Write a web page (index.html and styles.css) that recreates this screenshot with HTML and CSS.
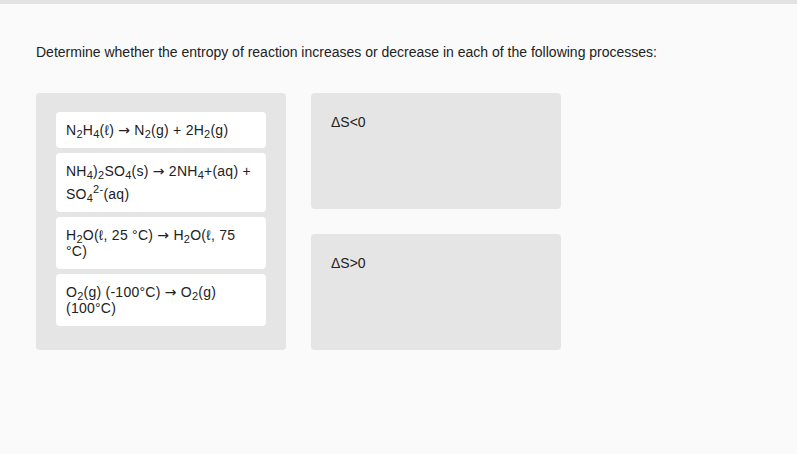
FILE: index.html
```html
<!DOCTYPE html>
<html>
<head>
<meta charset="utf-8">
<link rel="stylesheet" href="styles.css">
</head>
<body>
<div class="topbar"></div>
<main class="content">
  <p class="prompt">Determine whether the entropy of reaction increases or decrease in each of the following processes:</p>
  <div class="board">
    <div class="source">
      <div class="card">N<sub>2</sub>H<sub>4</sub>(ℓ) <span class="arrow">→</span> N<sub>2</sub>(g) + 2H<sub>2</sub>(g)</div>
      <div class="card">NH<sub>4</sub>)<sub>2</sub>SO<sub>4</sub>(s) <span class="arrow">→</span> 2NH<sub>4</sub>+(aq) + SO<sub>4</sub><sup>2-</sup>(aq)</div>
      <div class="card">H<sub>2</sub>O(ℓ, 25 °C) <span class="arrow">→</span> H<sub>2</sub>O(ℓ, 75 °C)</div>
      <div class="card">O<sub>2</sub>(g) (-100°C) <span class="arrow">→</span> O<sub>2</sub>(g) (100°C)</div>
    </div>
    <div class="targets">
      <div class="target">ΔS&lt;0</div>
      <div class="target">ΔS&gt;0</div>
    </div>
  </div>
</main>
</body>
</html>
```
FILE: styles.css
```css
html, body {
  margin: 0;
  padding: 0;
  background: #fafafa;
  font-family: "Liberation Sans", Arial, sans-serif;
  font-size: 14px;
  color: #222;
}
.topbar {
  height: 4px;
  background: #e2e2e2;
}
.content {
  padding: 40px 36px 0 36px;
}
.prompt {
  margin: 0;
  line-height: 16px;
}
.board {
  display: flex;
  gap: 25px;
  margin-top: 33px;
}
.source {
  width: 250px;
  box-sizing: border-box;
  background: #e5e5e5;
  border-radius: 4px;
  padding: 19px 20px 24px 20px;
  display: flex;
  flex-direction: column;
  gap: 5px;
}
.card {
  background: #fff;
  border-radius: 4px;
  padding: 10px;
  line-height: 16px;
  letter-spacing: 0.25px;
}
.arrow {
  font-family: "DejaVu Sans", sans-serif;
  font-size: 14px;
}
sub {
  font-size: 11px;
  line-height: 0;
  vertical-align: -3px;
}
sup {
  font-size: 11px;
  line-height: 20px;
  vertical-align: 6px;
}
.targets {
  display: flex;
  flex-direction: column;
  gap: 25px;
}
.target {
  width: 250px;
  height: 116px;
  box-sizing: border-box;
  background: #e5e5e5;
  border-radius: 4px;
  padding: 21px 20px;
  line-height: 16px;
}
```
